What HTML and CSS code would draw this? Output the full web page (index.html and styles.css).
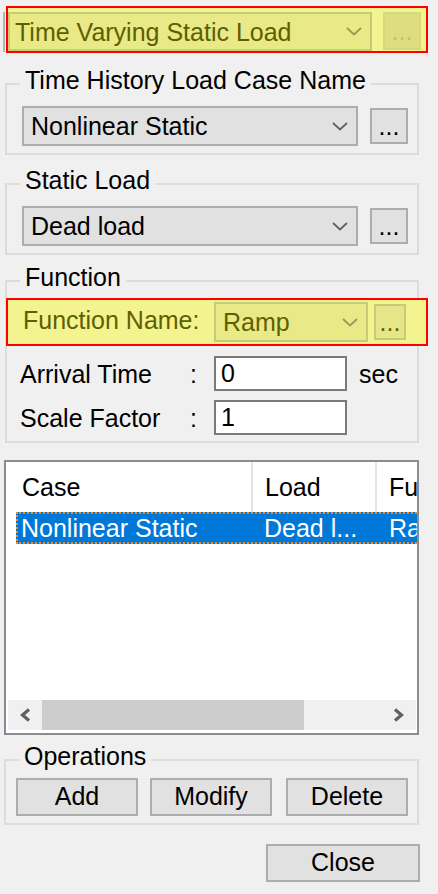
FILE: index.html
```html
<!DOCTYPE html>
<html lang="en">
<head>
<meta charset="utf-8">
<title>Time Varying Static Load</title>
<link rel="stylesheet" href="styles.css">
</head>
<body>
<div class="top-row">
  <div class="ghost"></div>
  <div class="hl hl-top">
    <div class="combo combo-top"><span>Time Varying Static Load</span><svg class="chev" width="16" height="9" viewBox="0 0 16 9"><polyline points="1,1 8,7.5 15,1" fill="none" stroke="currentColor" stroke-width="1.8"/></svg></div>
    <button class="dots dots-top">...</button>
  </div>
</div>

<div class="group g1">
  <div class="gtitle">Time History Load Case Name</div>
  <div class="grow">
    <div class="combo"><span>Nonlinear Static</span><svg class="chev" width="16" height="9" viewBox="0 0 16 9"><polyline points="1,1 8,7.5 15,1" fill="none" stroke="currentColor" stroke-width="1.8"/></svg></div>
    <button class="dots">...</button>
  </div>
</div>

<div class="group g2">
  <div class="gtitle">Static Load</div>
  <div class="grow">
    <div class="combo"><span>Dead load</span><svg class="chev" width="16" height="9" viewBox="0 0 16 9"><polyline points="1,1 8,7.5 15,1" fill="none" stroke="currentColor" stroke-width="1.8"/></svg></div>
    <button class="dots">...</button>
  </div>
</div>

<div class="group g3">
  <div class="gtitle">Function</div>
  <div class="hl hl-fn">
    <span class="fn-label">Function Name:</span>
    <div class="combo combo-fn"><span>Ramp</span><svg class="chev" width="16" height="9" viewBox="0 0 16 9"><polyline points="1,1 8,7.5 15,1" fill="none" stroke="currentColor" stroke-width="1.8"/></svg></div>
    <button class="dots dots-fn">...</button>
  </div>
  <div class="frow frow1">
    <span class="flabel">Arrival Time</span><span class="colon">:</span>
    <input class="tbox" type="text" value="0">
    <span class="unit">sec</span>
  </div>
  <div class="frow frow2">
    <span class="flabel">Scale Factor</span><span class="colon">:</span>
    <input class="tbox" type="text" value="1">
  </div>
</div>

<div class="list">
  <div class="lhead">
    <div class="hc hc1">Case</div>
    <div class="hc hc2">Load</div>
    <div class="hc hc3">Function</div>
  </div>
  <div class="lrow">
    <div class="rc rc1">Nonlinear Static</div>
    <div class="rc rc2">Dead l...</div>
    <div class="rc rc3">Ramp</div>
  </div>
  <div class="lspace"></div>
  <div class="hscroll">
    <div class="sarrow"><svg width="12" height="14" viewBox="0 0 12 14"><polyline points="10,1.5 3.5,7 10,12.5" fill="none" stroke="#606060" stroke-width="3.2"/></svg></div>
    <div class="thumb"></div>
    <div class="track"></div>
    <div class="sarrow"><svg width="12" height="14" viewBox="0 0 12 14"><polyline points="2,1.5 8.5,7 2,12.5" fill="none" stroke="#606060" stroke-width="3.2"/></svg></div>
  </div>
</div>

<div class="group g4">
  <div class="gtitle">Operations</div>
  <div class="brow">
    <button class="btn">Add</button>
    <button class="btn btn-mod">Modify</button>
    <button class="btn btn-del">Delete</button>
  </div>
</div>

<button class="btn btn-close">Close</button>
</body>
</html>
```

FILE: styles.css
```css
* { box-sizing: border-box; }

body {
  margin: 0;
  width: 438px;
  height: 894px;
  overflow: hidden;
  background: #f0f0f0;
  font-family: "Liberation Sans", Arial, sans-serif;
  font-size: 25px;
  line-height: 28px;
  color: #000;
}

button, input {
  font: inherit;
  line-height: 28px;
  color: inherit;
  margin: 0;
}

/* highlighted (yellow) rows */
.hl {
  display: flex;
  background: #f3f38f;
  border: 2px solid #ff0000;
}

.top-row {
  display: flex;
  margin-top: 6px;
  height: 47px;
}

.ghost {
  width: 2px;
  height: 40px;
  margin: 6px 1px 0 3px;
  background: #b4b4b4;
}

.hl-top {
  width: 422px;
  height: 47px;
  padding-top: 4px;
  align-items: flex-start;
}

/* combo boxes */
.combo {
  display: flex;
  align-items: center;
  justify-content: space-between;
  height: 40px;
  padding: 0 8px 0 7px;
  background: #e1e1e1;
  border: 2px solid #adadad;
  white-space: nowrap;
}

.chev { color: #606060; flex: none; }

.hl .combo {
  background: #e9e988;
  border-color: #c9c97a;
  color: #5f5f00;
}

.hl .chev { color: #9a9a52; }

.combo-top {
  width: 364px;
  height: 39px;
  padding-left: 5px;
}

/* "..." buttons */
.dots {
  display: flex;
  justify-content: center;
  align-items: center;
  width: 38px;
  height: 36px;
  padding: 0;
  background: #e1e1e1;
  border: 2px solid #adadad;
}

.dots-top {
  height: 38px;
  margin-left: 11px;
  background: #dedd80;
  border-color: #d7d77c;
  color: #c2c26a;
}

/* group boxes */
.group {
  border: 2px solid #dcdcdc;
  margin-left: 5px;
  width: 414px;
}

.gtitle {
  width: fit-content;
  margin: -19px 0 0 13px;
  padding: 0 5px;
  background: #f0f0f0;
  white-space: nowrap;
}

.g1 { margin-top: 30px; padding-bottom: 7px; }
.g2 { margin-top: 28px; padding-bottom: 7px; }
.g3 { margin-top: 25px; padding-bottom: 6px; }

.grow {
  display: flex;
  align-items: center;
  margin-top: 12px;
  padding-left: 15px;
}

.grow .combo { width: 336px; }
.grow .dots { margin-left: 12px; }

/* function row */
.hl-fn {
  width: 422px;
  height: 48px;
  margin: 7px 0 0 -1px;
  padding: 0 0 0 15px;
  align-items: center;
}

.fn-label {
  width: 191px;
  color: #5f5f00;
  padding-bottom: 4px;
  white-space: nowrap;
}

.combo-fn { width: 154px; }

.dots-fn {
  width: 32px;
  margin-left: 6px;
  background: #e6e688;
  border-color: #c9c97a;
  color: #5f5f00;
}

.frow {
  display: flex;
  align-items: center;
  padding-left: 13px;
}

.frow1 { margin-top: 10px; }
.frow2 { margin-top: 9px; }

.flabel { width: 170px; white-space: nowrap; }
.colon { width: 24px; }

.tbox {
  width: 133px;
  height: 35px;
  padding: 0 0 0 5px;
  background: #fff;
  border: 2px solid #7a7a7a;
  outline: none;
}

.unit { margin-left: 12px; }

/* list view */
.list {
  display: flex;
  flex-direction: column;
  margin: 17px 0 0 4px;
  width: 415px;
  height: 275px;
  background: #fff;
  border: 2px solid #898c93;
  overflow: hidden;
}

.lhead {
  display: flex;
  height: 50px;
  flex: none;
}

.hc {
  display: flex;
  align-items: center;
  white-space: nowrap;
  flex: none;
}

.hc1 { width: 247px; padding-left: 16px; border-right: 2px solid #e5e5e5; }
.hc2 { width: 124px; padding-left: 12px; border-right: 2px solid #e5e5e5; }
.hc3 { width: 120px; padding-left: 12px; }

.lrow {
  display: flex;
  flex: none;
  width: 480px;
  height: 32px;
  margin-left: 10px;
  background: #0078d7;
  border: 2px dotted #f28a28;
  color: #fff;
}

.rc { white-space: nowrap; flex: none; }
.rc1 { width: 235px; padding-left: 3px; }
.rc2 { width: 124px; padding-left: 11px; }
.rc3 { width: 100px; padding-left: 12px; }

.lspace { flex: 1; }

.hscroll {
  display: flex;
  flex: none;
  height: 30px;
  margin: 0 1px 3px 2px;
  background: #f0f0f0;
}

.sarrow {
  display: flex;
  align-items: center;
  justify-content: center;
  width: 34px;
}

.thumb {
  width: 262px;
  background: #cdcdcd;
}

.track { flex: 1; }

/* buttons */
.btn {
  display: flex;
  align-items: center;
  justify-content: center;
  width: 122px;
  height: 38px;
  padding: 0 0 3px 0;
  background: #e1e1e1;
  border: 2px solid #adadad;
}

.g4 {
  margin: 24px 0 0 4px;
  width: 415px;
  padding-bottom: 7px;
}

.brow {
  display: flex;
  margin-top: 8px;
  padding-left: 10px;
}

.btn-mod { margin-left: 12px; }
.btn-del { margin-left: 14px; }

.btn-close {
  width: 154px;
  margin: 19px 0 0 266px;
}
```
